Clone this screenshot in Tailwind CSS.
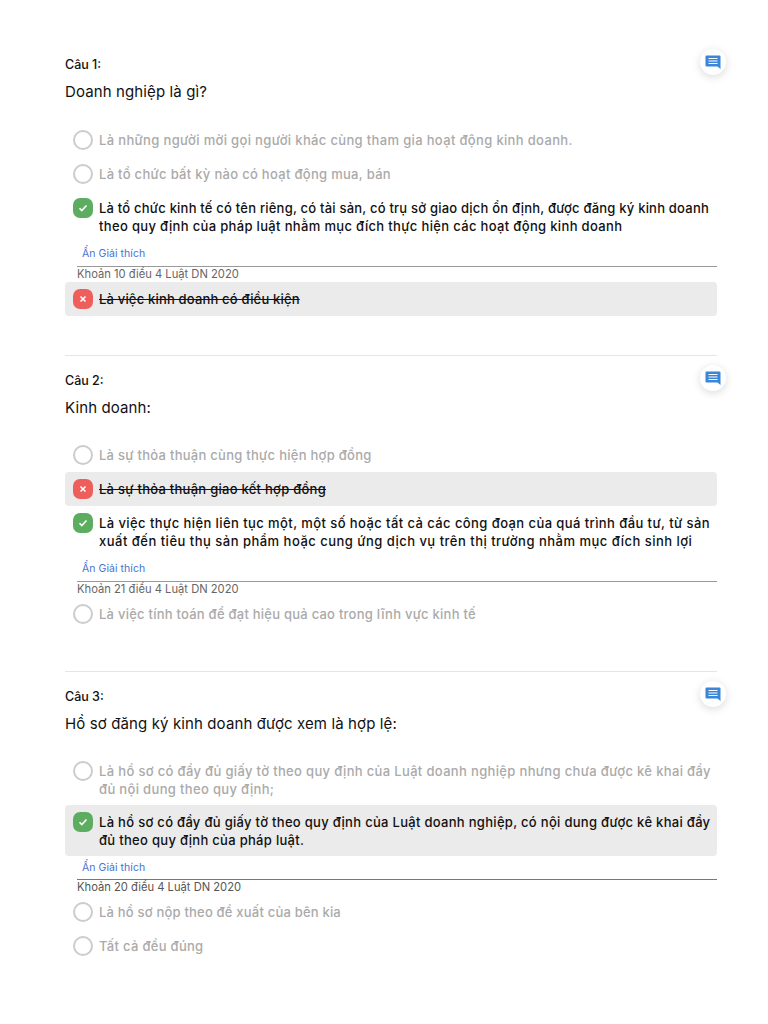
<!DOCTYPE html>
<html lang="vi">
<head>
  <meta charset="UTF-8">
  <title>Câu hỏi trắc nghiệm</title>
  <script src="https://cdn.jsdelivr.net/npm/@tailwindcss/browser@4"></script>
</head>
<body class="bg-white min-h-screen font-['Inter',sans-serif] text-[#111]">
  <main class="pl-[65px] pr-[51px] pt-[55px]">

    <!-- Câu 1 -->
    <section class="relative h-[300px]">
      <p class="pt-px text-[12.5px] leading-[18px] font-medium">Câu 1:</p>
      <h2 class="text-[15px] tracking-[0.12px] leading-[22px] mt-[7px] mb-[20px]">Doanh nghiệp là gì?</h2>
      <button class="absolute right-[-9px] top-[-6px] w-[26px] h-[26px] rounded-full bg-white shadow-[0_2px_8px_rgba(0,0,0,0.15)] flex items-center justify-center">
        <svg width="16" height="16" viewBox="0 0 16 16"><path fill="#3a86d8" d="M1.500 1.500h13a1 1 0 0 1 1 1v12.500l-3-2.500h-11a1 1 0 0 1-1-1v-9a1 1 0 0 1 1-1z"/><path stroke="#fff" stroke-width="1.200" d="M3.500 4.500h9M3.500 7h9M3.500 9.500h9"/></svg>
      </button>
      <div class="flex gap-[6px] pl-[8px] pr-[2px] py-[7px] rounded text-[13px] tracking-[0.34px] leading-[18px] text-[#aaa] font-medium">
        <span class="w-[20px] h-[20px] shrink-0 rounded-[10px] border-2 border-[#ccc] bg-white"></span>
        <span class="pt-px -mb-px">Là những người mời gọi người khác cùng tham gia hoạt động kinh doanh.</span>
      </div>
      <div class="flex gap-[6px] pl-[8px] pr-[2px] py-[7px] rounded text-[13px] tracking-[0.3px] leading-[18px] text-[#aaa] font-medium">
        <span class="w-[20px] h-[20px] shrink-0 rounded-[10px] border-2 border-[#ccc] bg-white"></span>
        <span class="pt-px -mb-px">Là tổ chức bất kỳ nào có hoạt động mua, bán</span>
      </div>
      <div class="flex gap-[6px] pl-[8px] pr-[2px] py-[7px] rounded text-[13px] tracking-[0.34px] leading-[18px] font-medium">
        <span class="w-[20px] h-[20px] shrink-0 rounded-[7px] bg-[#5cad5f] flex items-center justify-center">
          <svg width="10" height="10" viewBox="0 0 10 10"><path d="M1.500 5.200l2.300 2.300 4.700-5" fill="none" stroke="#fff" stroke-width="1.600"/></svg>
        </span>
        <span class="pt-px -mb-px whitespace-nowrap"><span class="tracking-[0.21px]">Là tổ chức kinh tế có tên riêng, có tài sản, có trụ sở giao dịch ổn định, được đăng ký kinh doanh</span><br>theo quy định của pháp luật nhằm mục đích thực hiện các hoạt động kinh doanh</span>
      </div>
      <div class="ml-[12px] h-[41px]">
        <a class="block pl-[5px] pt-[6px] text-[10.5px] tracking-[0.05px] leading-[14px] text-[#4a72d0] h-[26px] border-b border-[#999]">Ẩn Giải thích</a>
        <p class="text-[11.2px] leading-[14px] text-[#666]">Khoản 10 điều 4 Luật DN 2020</p>
      </div>
      <div class="flex gap-[6px] pl-[8px] pr-[2px] py-[7px] rounded bg-[#ebebeb] text-[13px] tracking-[0.18px] leading-[18px] font-medium">
        <span class="w-[20px] h-[20px] shrink-0 rounded-[7px] bg-[#ee5f5b] flex items-center justify-center">
          <svg width="10" height="10" viewBox="0 0 10 10"><path d="M2.500 2.500l5 5M7.500 2.500l-5 5" fill="none" stroke="#fff" stroke-width="1.500"/></svg>
        </span>
        <span class="pt-px -mb-px line-through">Là việc kinh doanh có điều kiện</span>
      </div>
    </section>

    <hr class="border-[#e5e5e5] mb-[15px]">

    <!-- Câu 2 -->
    <section class="relative h-[300px]">
      <p class="pt-px text-[12.5px] leading-[18px] font-medium">Câu 2:</p>
      <h2 class="text-[15px] tracking-[0.12px] leading-[22px] mt-[7px] mb-[19px]">Kinh doanh:</h2>
      <button class="absolute right-[-9px] top-[-6px] w-[26px] h-[26px] rounded-full bg-white shadow-[0_2px_8px_rgba(0,0,0,0.15)] flex items-center justify-center">
        <svg width="16" height="16" viewBox="0 0 16 16"><path fill="#3a86d8" d="M1.500 1.500h13a1 1 0 0 1 1 1v12.500l-3-2.500h-11a1 1 0 0 1-1-1v-9a1 1 0 0 1 1-1z"/><path stroke="#fff" stroke-width="1.200" d="M3.500 4.500h9M3.500 7h9M3.500 9.500h9"/></svg>
      </button>
      <div class="flex gap-[6px] pl-[8px] pr-[2px] py-[7px] rounded text-[13px] tracking-[0.27px] leading-[18px] text-[#aaa] font-medium">
        <span class="w-[20px] h-[20px] shrink-0 rounded-[10px] border-2 border-[#ccc] bg-white"></span>
        <span class="pt-px -mb-px">Là sự thỏa thuận cùng thực hiện hợp đồng</span>
      </div>
      <div class="flex gap-[6px] pl-[8px] pr-[2px] py-[7px] rounded bg-[#ebebeb] text-[13px] tracking-[0.26px] leading-[18px] font-medium">
        <span class="w-[20px] h-[20px] shrink-0 rounded-[7px] bg-[#ee5f5b] flex items-center justify-center">
          <svg width="10" height="10" viewBox="0 0 10 10"><path d="M2.500 2.500l5 5M7.500 2.500l-5 5" fill="none" stroke="#fff" stroke-width="1.500"/></svg>
        </span>
        <span class="pt-px -mb-px line-through">Là sự thỏa thuận giao kết hợp đồng</span>
      </div>
      <div class="flex gap-[6px] pl-[8px] pr-[2px] py-[7px] rounded text-[13px] tracking-[0.42px] leading-[18px] font-medium">
        <span class="w-[20px] h-[20px] shrink-0 rounded-[7px] bg-[#5cad5f] flex items-center justify-center">
          <svg width="10" height="10" viewBox="0 0 10 10"><path d="M1.500 5.200l2.300 2.300 4.700-5" fill="none" stroke="#fff" stroke-width="1.600"/></svg>
        </span>
        <span class="pt-px -mb-px whitespace-nowrap">Là việc thực hiện liên tục một, một số hoặc tất cả các công đoạn của quá trình đầu tư, từ sản<br><span class="tracking-[0.49px]">xuất đến tiêu thụ sản phẩm hoặc cung ứng dịch vụ trên thị trường nhằm mục đích sinh lợi</span></span>
      </div>
      <div class="ml-[12px] h-[41px]">
        <a class="block pl-[5px] pt-[6px] text-[10.5px] tracking-[0.05px] leading-[14px] text-[#4a72d0] h-[26px] border-b border-[#999]">Ẩn Giải thích</a>
        <p class="text-[11.2px] leading-[14px] text-[#666]">Khoản 21 điều 4 Luật DN 2020</p>
      </div>
      <div class="flex gap-[6px] pl-[8px] pr-[2px] py-[7px] rounded text-[13px] tracking-[0.24px] leading-[18px] text-[#aaa] font-medium">
        <span class="w-[20px] h-[20px] shrink-0 rounded-[10px] border-2 border-[#ccc] bg-white"></span>
        <span class="pt-px -mb-px">Là việc tính toán để đạt hiệu quả cao trong lĩnh vực kinh tế</span>
      </div>
    </section>

    <hr class="border-[#e5e5e5] mb-[15px]">

    <!-- Câu 3 -->
    <section class="relative">
      <p class="pt-px text-[12.5px] leading-[18px] font-medium">Câu 3:</p>
      <h2 class="text-[15px] tracking-[0.12px] leading-[22px] mt-[7px] mb-[20px]">Hồ sơ đăng ký kinh doanh được xem là hợp lệ:</h2>
      <button class="absolute right-[-9px] top-[-6px] w-[26px] h-[26px] rounded-full bg-white shadow-[0_2px_8px_rgba(0,0,0,0.15)] flex items-center justify-center">
        <svg width="16" height="16" viewBox="0 0 16 16"><path fill="#3a86d8" d="M1.500 1.500h13a1 1 0 0 1 1 1v12.500l-3-2.500h-11a1 1 0 0 1-1-1v-9a1 1 0 0 1 1-1z"/><path stroke="#fff" stroke-width="1.200" d="M3.500 4.500h9M3.500 7h9M3.500 9.500h9"/></svg>
      </button>
      <div class="flex gap-[6px] pl-[8px] pr-[2px] pt-[6px] pb-[8px] rounded text-[13px] tracking-[0.34px] leading-[18px] text-[#aaa] font-medium">
        <span class="w-[20px] h-[20px] shrink-0 rounded-[10px] border-2 border-[#ccc] bg-white"></span>
        <span class="pt-px -mb-px whitespace-nowrap">Là hồ sơ có đầy đủ giấy tờ theo quy định của Luật doanh nghiệp nhưng chưa được kê khai đầy<br>đủ nội dung theo quy định;</span>
      </div>
      <div class="flex gap-[6px] pl-[8px] pr-[2px] pt-[7px] pb-[8px] rounded bg-[#ebebeb] text-[13px] tracking-[0.3px] leading-[18px] font-medium">
        <span class="w-[20px] h-[20px] shrink-0 rounded-[7px] bg-[#5cad5f] flex items-center justify-center">
          <svg width="10" height="10" viewBox="0 0 10 10"><path d="M1.500 5.200l2.300 2.300 4.700-5" fill="none" stroke="#fff" stroke-width="1.600"/></svg>
        </span>
        <span class="pt-px -mb-px whitespace-nowrap">Là hồ sơ có đầy đủ giấy tờ theo quy định của Luật doanh nghiệp, có nội dung được kê khai đầy<br>đủ theo quy định của pháp luật.</span>
      </div>
      <div class="ml-[12px] h-[39px]">
        <a class="block pl-[5px] pt-[5px] text-[10.5px] tracking-[0.05px] leading-[14px] text-[#4a72d0] h-[24px] border-b border-[#777]">Ẩn Giải thích</a>
        <p class="text-[11.2px] leading-[14px] text-[#555]">Khoản 20 điều 4 Luật DN 2020</p>
      </div>
      <div class="flex gap-[6px] pl-[8px] pr-[2px] py-[7px] rounded text-[13px] tracking-[0.2px] leading-[18px] text-[#aaa] font-medium">
        <span class="w-[20px] h-[20px] shrink-0 rounded-[10px] border-2 border-[#ccc] bg-white"></span>
        <span class="pt-px -mb-px">Là hồ sơ nộp theo đề xuất của bên kia</span>
      </div>
      <div class="flex gap-[6px] pl-[8px] pr-[2px] py-[7px] rounded text-[13px] tracking-[0.3px] leading-[18px] text-[#aaa] font-medium">
        <span class="w-[20px] h-[20px] shrink-0 rounded-[10px] border-2 border-[#ccc] bg-white"></span>
        <span class="pt-px -mb-px">Tất cả đều đúng</span>
      </div>
    </section>
  </main>
</body>
</html>
